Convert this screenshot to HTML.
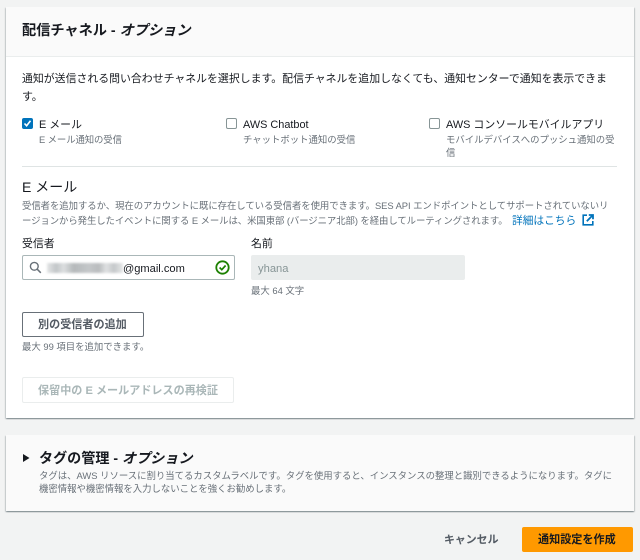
<!DOCTYPE html>
<html lang="ja"><head><meta charset="utf-8"><style>
html,body{margin:0;padding:0}
body{width:640px;height:560px;background:#f2f3f3;position:relative;overflow:hidden;font-family:"Liberation Sans","Noto Sans CJK JP",sans-serif;color:#16191f}
.t{position:absolute;white-space:nowrap;line-height:14px;font-size:10.9px;filter:blur(.3px)}
.s{color:#687078;font-size:9.4px}
.box{position:absolute;box-sizing:border-box}
.card{position:absolute;left:6px;width:628px;background:#fff;box-shadow:0 1px 1px 0 rgba(0,28,36,.3),1px 1px 1px 0 rgba(0,28,36,.15),-1px 1px 1px 0 rgba(0,28,36,.15)}
.cb{position:absolute;width:11px;height:11px;box-sizing:border-box;border:1px solid #879596;border-radius:2px;background:#fff}
</style></head><body>
<div class="card" style="top:7px;height:411px"></div>
<div class="box" style="left:6px;top:7px;width:628px;height:49.5px;background:#fafafa;border-bottom:1px solid #eaeded"></div>
<div class="t" style="left:22px;top:23px;font-size:14.2px;line-height:16px;font-weight:700">配信チャネル - <i>オプション</i></div>
<div class="t" style="left:22px;top:72px">通知が送信される問い合わせチャネルを選択します。配信チャネルを追加しなくても、通知センターで通知を表示できま</div>
<div class="t" style="left:22px;top:90px">す。</div>

<div class="cb" style="left:22px;top:118px;background:#0073bb;border-color:#0073bb"><svg width="9" height="9" viewBox="0 0 9 9" style="position:absolute;left:0;top:0"><path d="M1.5 4.5L3.6 6.8L7.5 1.8" fill="none" stroke="#fff" stroke-width="1.6"/></svg></div>
<div class="t" style="left:39px;top:117.5px">E メール</div>
<div class="t s" style="left:39px;top:132.5px;letter-spacing:-.1px">E メール通知の受信</div>

<div class="cb" style="left:226px;top:118px"></div>
<div class="t" style="left:243px;top:117.5px">AWS Chatbot</div>
<div class="t s" style="left:243px;top:132.5px">チャットボット通知の受信</div>

<div class="cb" style="left:429px;top:118px"></div>
<div class="t" style="left:446px;top:117.5px">AWS コンソールモバイルアプリ</div>
<div class="t s" style="left:446px;top:132.5px">モバイルデバイスへのプッシュ通知の受</div>
<div class="t s" style="left:446px;top:145.5px">信</div>

<div class="box" style="left:22px;top:166px;width:595px;height:1px;background:#dfe4e4"></div>

<div class="t" style="left:22px;top:179px;font-size:14px;line-height:16px">E メール</div>
<div class="t s" style="left:22px;top:198.5px;letter-spacing:-.05px">受信者を追加するか、現在のアカウントに既に存在している受信者を使用できます。SES API エンドポイントとしてサポートされていないリ</div>
<div class="t s" style="left:22px;top:213.5px;letter-spacing:-.07px">ージョンから発生したイベントに関する E メールは、米国東部 (バージニア北部) を経由してルーティングされます。</div>
<div class="t" style="left:512px;top:213.5px;color:#0073bb;font-size:10.7px">詳細はこちら</div>
<svg style="position:absolute;left:581.5px;top:214px" width="12" height="12" viewBox="0 0 12 12"><path d="M5 1.2H1.2V10.8H10.8V7" fill="none" stroke="#0073bb" stroke-width="1.6"/><path d="M4.8 7.2L10.2 1.8M6.8 1H11V5.2" fill="none" stroke="#0073bb" stroke-width="1.8"/></svg>

<div class="t" style="left:22px;top:237px">受信者</div>
<div class="t" style="left:251px;top:237px">名前</div>

<div class="box" style="left:22px;top:255px;width:213px;height:25px;background:#fff;border:1px solid #aab7b8;border-radius:2px"></div>
<svg style="position:absolute;left:29px;top:261px" width="13" height="13" viewBox="0 0 13 13"><circle cx="5.3" cy="5.3" r="3.9" fill="none" stroke="#687078" stroke-width="1.4"/><path d="M8.2 8.2L11.8 11.8" stroke="#687078" stroke-width="1.5"/></svg>
<div class="box" style="left:47px;top:263px;width:76px;height:10px;background:linear-gradient(90deg,#e4e6e7 0,#c2c6c8 12%,#dcdfe0 22%,#b5b9bb 35%,#c4c7c9 55%,#b9bcbe 68%,#dfe1e2 78%,#c5c8ca 88%,#e6e8e8 100%);filter:blur(1px)"></div>
<div class="t" style="left:123px;top:262px;font-size:11.1px">@gmail.com</div>
<svg style="position:absolute;left:215px;top:260px" width="15" height="15" viewBox="0 0 15 15"><circle cx="7.5" cy="7.5" r="6.2" fill="none" stroke="#1d8102" stroke-width="1.8"/><path d="M4.6 7.5L6.8 9.7L10.6 5.5" fill="none" stroke="#1d8102" stroke-width="1.7"/></svg>

<div class="box" style="left:251px;top:255px;width:214px;height:25px;background:#eaeded;border-radius:2px"></div>
<div class="t" style="left:258px;top:262px;color:#879596;font-size:11.2px">yhana</div>
<div class="t s" style="left:251px;top:284px">最大 64 文字</div>

<div class="box" style="left:22px;top:312px;width:122px;height:25px;background:#fff;border:1px solid #687078;border-radius:2px"></div>
<div class="t" style="left:38px;top:318px;font-weight:700;color:#545b64;font-size:11.1px">別の受信者の追加</div>
<div class="t s" style="left:22px;top:340px">最大 99 項目を追加できます。</div>

<div class="box" style="left:22px;top:377px;width:212px;height:26px;background:#fff;border:1px solid #eaeded;border-radius:2px"></div>
<div class="t" style="left:38px;top:384px;font-weight:700;color:#aab7b8;font-size:11.1px">保留中の E メールアドレスの再検証</div>

<div class="card" style="top:435px;height:76px;background:#fafafa"></div>
<svg style="position:absolute;left:22px;top:453px" width="8" height="10" viewBox="0 0 8 10"><path d="M1 1L7.5 5L1 9Z" fill="#16191f"/></svg>
<div class="t" style="left:39px;top:450px;font-size:14.1px;line-height:16px;font-weight:700">タグの管理 - <i>オプション</i></div>
<div class="t s" style="left:39px;top:469px">タグは、AWS リソースに割り当てるカスタムラベルです。タグを使用すると、インスタンスの整理と識別できるようになります。タグに</div>
<div class="t s" style="left:39px;top:482px">機密情報や機密情報を入力しないことを強くお勧めします。</div>

<div class="t" style="left:444px;top:533px;font-weight:700;color:#545b64;font-size:10.9px">キャンセル</div>
<div class="box" style="left:522px;top:527px;width:111px;height:25px;background:#ff9900;border-radius:2px"></div>
<div class="t" style="left:538px;top:533px;font-weight:700;color:#16191f;font-size:11.1px">通知設定を作成</div>
</body></html>
